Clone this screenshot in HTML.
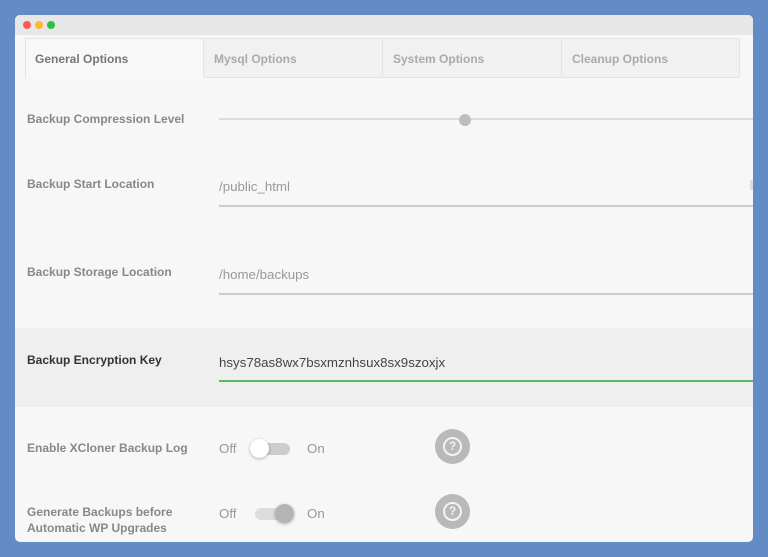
<!DOCTYPE html>
<html><head><meta charset="utf-8"><style>
*{margin:0;padding:0;box-sizing:border-box}
body{width:768px;height:557px;background:#638bc6;font-family:"Liberation Sans",sans-serif;position:relative;overflow:hidden}
.win{position:absolute;left:15px;top:15px;width:738px;height:527px;background:#f7f7f7;border-radius:5px;overflow:hidden}
.tb{height:20px;background:#e7e7e7;position:relative}
.dot{position:absolute;top:6px;width:8px;height:8px;border-radius:50%}
.abs{position:absolute}
.tab{position:absolute;top:23px;height:40px;background:#f1f1f1;border:1px solid #e4e4e4;font-size:12px;font-weight:bold;color:#aaa;padding:13px 0 0 10px}
.lbl{position:absolute;left:12px;font-size:12px;font-weight:bold;color:#888}
.val{position:absolute;left:204px;font-size:13.3px;color:#999}
.line{position:absolute;left:204px;right:0;height:2px;background:#ccc}
.help{position:absolute;left:420px;width:35px;height:35px;border-radius:50%;background:#b9b9b9}
.help span{position:absolute;left:8px;top:8px;width:19px;height:19px;border:2px solid #f3f3f3;border-radius:50%;color:#f3f3f3;font-size:12px;font-weight:bold;text-align:center;line-height:15px}
</style></head><body>
<div class="win">
<div class="tb"><div class="dot" style="left:8px;background:#fd5a52"></div><div class="dot" style="left:20px;background:#fdba2f"></div><div class="dot" style="left:32px;background:#2ec03f"></div></div>
<div class="tab" style="left:188px;width:180px">Mysql Options</div>
<div class="tab" style="left:367px;width:180px">System Options</div>
<div class="tab" style="left:546px;width:179px">Cleanup Options</div>
<div class="tab" style="left:10px;width:179px;background:#f8f8f8;color:#777;border-bottom-color:#f8f8f8;padding-left:9px">General Options</div>

<div class="lbl" style="top:97px">Backup Compression Level</div>
<div class="abs" style="left:204px;right:0;top:103px;height:2px;background:#ddd"></div>
<div class="abs" style="left:444px;top:99px;width:12px;height:12px;border-radius:50%;background:#bdbdbd"></div>

<div class="lbl" style="top:162px">Backup Start Location</div>
<div class="val" style="top:164px">/public_html</div>
<div class="line" style="top:190px"></div>
<div class="abs" style="left:735px;top:165px;width:3px;height:10px;background:#ddd"></div>

<div class="lbl" style="top:250px">Backup Storage Location</div>
<div class="val" style="top:252px">/home/backups</div>
<div class="line" style="top:278px"></div>

<div class="abs" style="left:0;right:0;top:313px;height:79px;background:#efefef"></div>
<div class="lbl" style="top:338px;color:#333">Backup Encryption Key</div>
<div class="val" style="top:340px;color:#444">hsys78as8wx7bsxmznhsux8sx9szoxjx</div>
<div class="line" style="top:365px;background:#5cba5c"></div>

<div class="lbl" style="top:426px">Enable XCloner Backup Log</div>
<div class="val" style="top:426px">Off</div>
<div class="abs" style="left:240px;top:428px;width:35px;height:12px;border-radius:6px;background:#ccc"></div>
<div class="abs" style="left:235px;top:424px;width:19px;height:19px;border-radius:50%;background:#fff;box-shadow:0 1px 3px rgba(0,0,0,.3)"></div>
<div class="val" style="left:292px;top:426px">On</div>
<div class="help" style="top:414px"><span>?</span></div>

<div class="lbl" style="top:489px;line-height:16px">Generate Backups before<br>Automatic WP Upgrades</div>
<div class="val" style="top:491px">Off</div>
<div class="abs" style="left:240px;top:493px;width:35px;height:12px;border-radius:6px;background:#ddd"></div>
<div class="abs" style="left:260px;top:489px;width:19px;height:19px;border-radius:50%;background:#b4b4b4;box-shadow:0 1px 3px rgba(0,0,0,.3)"></div>
<div class="val" style="left:292px;top:491px">On</div>
<div class="help" style="top:479px"><span>?</span></div>
</div>
</body></html>
